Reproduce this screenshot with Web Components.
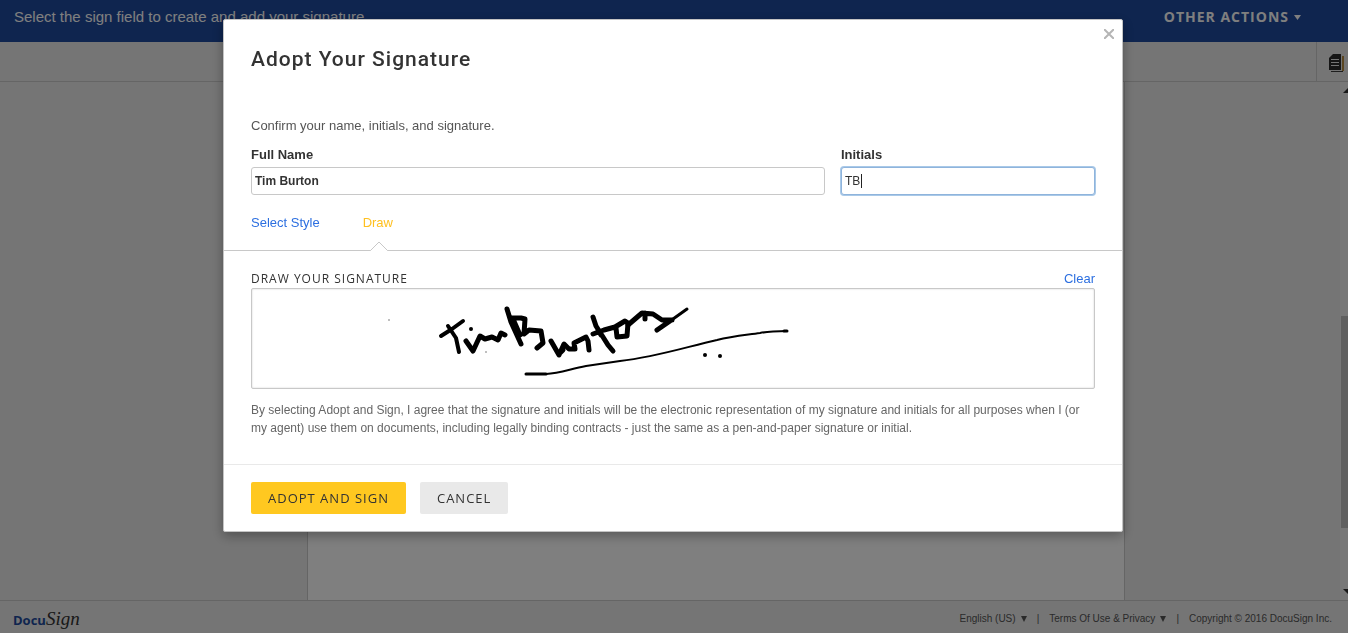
<!DOCTYPE html>
<html lang="en">
<head>
  <meta charset="UTF-8">
  <meta name="viewport" content="width=device-width, initial-scale=1.0">
  <title>Adopt Your Signature</title>
  <style>
    body {
      margin: 0;
      font-family: "Liberation Sans", Arial, sans-serif;
      overflow: hidden;
    }
  </style>
</head>
<body>
  <signing-page></signing-page>
  <modal-dialog heading="Adopt Your Signature">
    <signature-form></signature-form>
    <button slot="actions" class="primary" type="button">ADOPT AND SIGN</button>
    <button slot="actions" type="button">CANCEL</button>
  </modal-dialog>

  <script>
    class ActionHeader extends HTMLElement {
      constructor() {
        super();
        this.attachShadow({ mode: "open" });
      }

      connectedCallback() {
        this.shadowRoot.innerHTML = `
          <style>
            :host {
              display: flex;
              justify-content: space-between;
              align-items: flex-start;
              height: 42px;
              padding: 8px 47px 0 14px;
              box-sizing: border-box;
              background: #1e4a9e;
              color: #fff;
              font-size: 15px;
              line-height: 18px;
            }

            button {
              display: flex;
              align-items: center;
              gap: 5px;
              padding: 0;
              border: 0;
              background: none;
              color: inherit;
              font: bold 14px/18px "Open Sans", sans-serif;
              letter-spacing: 1px;
            }
          </style>
          <span>Select the sign field to create and add your signature</span>
          <button type="button">OTHER ACTIONS
            <svg width="7" height="5" viewBox="0 0 7 5" fill="currentColor" aria-hidden="true"><path d="M0 0h7L3.5 5z"/></svg>
          </button>
        `;
      }
    }

    class ToolBar extends HTMLElement {
      constructor() {
        super();
        this.attachShadow({ mode: "open" });
      }

      connectedCallback() {
        this.shadowRoot.innerHTML = `
          <style>
            :host {
              display: flex;
              justify-content: flex-end;
              height: 40px;
              box-sizing: border-box;
              border-bottom: 1px solid #cacaca;
            }

            button {
              display: flex;
              align-items: center;
              width: 32px;
              padding: 2px 0 0 11px;
              box-sizing: border-box;
              border: 0;
              border-left: 1px solid #cacaca;
              background: none;
            }

            svg {
              flex: none;
            }
          </style>
          <button type="button" aria-label="Documents">
            <svg width="17" height="20" viewBox="0 0 17 20" aria-hidden="true">
              <path d="M3 18h12v1H3z" fill="#3c3c3c"/>
              <path d="M14 3h2v15h-2z" fill="#b58a40"/>
              <path d="M5 1h8v16H1V5z" fill="#2c2c2c"/>
              <path d="M3 6.500h8M3 9.500h8M3 12.500h8" stroke="#eaeaea"/>
            </svg>
          </button>
        `;
      }
    }

    class DocumentArea extends HTMLElement {
      constructor() {
        super();
        this.attachShadow({ mode: "open" });
      }

      connectedCallback() {
        this.shadowRoot.innerHTML = `
          <style>
            :host {
              display: flex;
              flex: 1;
              min-height: 0;
            }

            .desk {
              flex: 1;
              display: grid;
              grid-template-columns: 10fr minmax(0, 818px) 7fr;
            }

            .sheet {
              grid-column: 2;
              background: #fff;
              border: solid #cacaca;
              border-width: 0 1px;
            }

            .scrollbar {
              display: flex;
              flex-direction: column;
              align-items: flex-end;
              justify-content: space-between;
              width: 8px;
              padding: 6px 0;
              box-sizing: border-box;
              background: #f1f1f1;
              overflow: hidden;
            }

            .track {
              flex: 1;
              display: grid;
              grid-template-rows: 22fr 21fr 6fr;
              width: 7px;
            }

            .thumb {
              grid-row: 2;
              background: #c1c1c1;
            }

            svg {
              display: block;
            }
          </style>
          <div class="desk"><div class="sheet"></div></div>
          <div class="scrollbar">
            <svg width="5" height="5" viewBox="0 0 5 5" aria-hidden="true"><path d="M5 0v5H0z" fill="#333"/></svg>
            <div class="track"><div class="thumb"></div></div>
            <svg width="5" height="5" viewBox="0 0 5 5" aria-hidden="true"><path d="M0 0h5v5z" fill="#333"/></svg>
          </div>
        `;
      }
    }

    class PageFooter extends HTMLElement {
      constructor() {
        super();
        this.attachShadow({ mode: "open" });
      }

      connectedCallback() {
        this.shadowRoot.innerHTML = `
          <style>
            :host {
              display: flex;
              justify-content: space-between;
              align-items: center;
              height: 33px;
              padding: 4px 16px 0 13px;
              box-sizing: border-box;
              border-top: 1px solid #cacaca;
              color: #555;
              font-size: 10px;
              line-height: 18px;
            }

            .logo {
              display: flex;
              align-items: baseline;
              color: #1e4a9e;
              font: bold 13px/20px "Open Sans", sans-serif;
              text-decoration: none;
            }

            .logo i {
              color: #333;
              font: italic 19px/20px "Liberation Serif", serif;
            }

            nav {
              display: flex;
              align-items: center;
              gap: 10px;
            }

            button {
              display: flex;
              align-items: center;
              gap: 5px;
              padding: 0;
              border: 0;
              background: none;
              color: inherit;
              font: inherit;
            }
          </style>
          <a class="logo" href="#">Docu<i>Sign</i></a>
          <nav>
            <button type="button">English (US)
              <svg width="6" height="6" viewBox="0 0 6 6" fill="currentColor" aria-hidden="true"><path d="M0 0h6L3 6z"/></svg>
            </button>
            <span>|</span>
            <button type="button">Terms Of Use &amp; Privacy
              <svg width="6" height="6" viewBox="0 0 6 6" fill="currentColor" aria-hidden="true"><path d="M0 0h6L3 6z"/></svg>
            </button>
            <span>|</span>
            <span>Copyright © 2016 DocuSign Inc.</span>
          </nav>
        `;
      }
    }

    class SigningPage extends HTMLElement {
      constructor() {
        super();
        this.attachShadow({ mode: "open" });
      }

      connectedCallback() {
        this.shadowRoot.innerHTML = `
          <style>
            :host {
              display: flex;
              flex-direction: column;
              height: 100vh;
              background: #eaeaea;
            }
          </style>
          <action-header></action-header>
          <tool-bar></tool-bar>
          <document-area></document-area>
          <page-footer></page-footer>
        `;
      }
    }

    class ModalDialog extends HTMLElement {
      constructor() {
        super();
        this.attachShadow({ mode: "open" });
      }

      connectedCallback() {
        this.shadowRoot.innerHTML = `
          <style>
            :host {
              position: fixed;
              inset: 0;
              display: flex;
              justify-content: center;
              align-items: flex-start;
              padding: 19px 16px 19px 14px;
              background: rgba(0, 0, 0, 0.5);
            }

            .dialog {
              position: relative;
              width: 100%;
              max-width: 900px;
              box-sizing: border-box;
              background: #fff;
              border: 1px solid #c4c4c4;
              border-radius: 2px;
              box-shadow: 0 4px 12px rgba(0, 0, 0, 0.3);
            }

            h1 {
              margin: 0;
              padding: 24px 27px 0;
              color: #333;
              font: 500 21px/30px Roboto, sans-serif;
              letter-spacing: 1px;
            }

            .close {
              position: absolute;
              top: 9px;
              right: 8px;
              padding: 0;
              border: 0;
              background: none;
              line-height: 0;
            }

            footer {
              display: flex;
              gap: 14px;
              padding: 17px 27px;
              border-top: 1px solid #e9e9e9;
            }

            ::slotted(button) {
              height: 32px;
              padding: 0 17px;
              border: 0;
              border-radius: 2px;
              background: #e9e9e9;
              color: #333;
              font: 13px/18px "Open Sans", sans-serif;
              letter-spacing: 1px;
            }

            ::slotted(.primary) {
              background: #ffc820;
            }
          </style>
          <div class="dialog" role="dialog" aria-modal="true" aria-labelledby="heading">
            <button class="close" type="button" aria-label="Close">
              <svg width="10" height="10" viewBox="0 0 10 10" stroke="#b5b5b5" stroke-width="2" aria-hidden="true"><path d="M0 0l10 10M10 0L0 10"/></svg>
            </button>
            <h1 id="heading">${this.getAttribute("heading")}</h1>
            <slot></slot>
            <footer><slot name="actions"></slot></footer>
          </div>
        `;
      }
    }

    class SignatureForm extends HTMLElement {
      constructor() {
        super();
        this.attachShadow({ mode: "open" });
      }

      connectedCallback() {
        this.shadowRoot.innerHTML = `
          <style>
            :host {
              display: block;
              padding-top: 43px;
              color: #555;
              font-size: 13px;
              line-height: 18px;
            }

            p {
              margin: 0;
            }

            a {
              color: #2c6fe0;
              text-decoration: none;
            }

            .details {
              padding: 0 27px;
            }

            .fields {
              display: grid;
              grid-template-columns: 61fr 27fr;
              gap: 16px;
              margin-top: 11px;
            }

            label {
              display: block;
              margin-bottom: 3px;
              color: #333;
              font-weight: bold;
            }

            input {
              display: block;
              width: 100%;
              height: 28px;
              padding: 0 3px;
              box-sizing: border-box;
              border: 1px solid #c8c8c8;
              border-radius: 3px;
              color: #333;
              font: bold 12px "Liberation Sans", Arial, sans-serif;
            }

            /* the active field carries its own caret */
            #initials {
              border-color: #8fb4dc;
              outline: 0;
              box-shadow: 0 0 0 1px #a9c9e8;
              background: linear-gradient(#222, #222) 19px center / 1px 14px no-repeat #fff;
              caret-color: transparent;
              font-weight: normal;
            }

            .tabs {
              display: flex;
              gap: 43px;
              margin-top: 19px;
              padding: 0 27px;
              border-bottom: 1px solid #c8c8c8;
            }

            .tabs a {
              position: relative;
              padding-bottom: 18px;
            }

            .tabs .active {
              color: #ffc020;
            }

            .tabs svg {
              position: absolute;
              left: 50%;
              bottom: -1px;
              margin-left: -8px;
            }

            .draw {
              padding: 19px 27px 27px;
            }

            .bar {
              display: flex;
              justify-content: space-between;
            }

            h2 {
              margin: 0;
              color: #333;
              font: 12px/18px "Open Sans", sans-serif;
              letter-spacing: 1px;
            }

            .terms {
              margin-top: 12px;
              color: #666;
              font-size: 12px;
            }
          </style>
          <p class="details">Confirm your name, initials, and signature.</p>
          <div class="details fields">
            <div>
              <label for="name">Full Name</label>
              <input id="name" type="text" value="Tim Burton">
            </div>
            <div>
              <label for="initials">Initials</label>
              <input id="initials" type="text" value="TB">
            </div>
          </div>
          <nav class="tabs">
            <a href="#style">Select Style</a>
            <a href="#draw" class="active">Draw
              <svg width="18" height="10" viewBox="0 0 18 10" aria-hidden="true">
                <path d="M0 10L9 1l9 9z" fill="#fff"/>
                <path d="M0 9.500h.5L9 1l8.500 8.500h.5" fill="none" stroke="#c8c8c8"/>
              </svg>
            </a>
          </nav>
          <section class="draw">
            <div class="bar">
              <h2>DRAW YOUR SIGNATURE</h2>
              <a href="#clear">Clear</a>
            </div>
            <signature-pad></signature-pad>
            <p class="terms">By selecting Adopt and Sign, I agree that the signature and initials will be the electronic representation of my signature and initials for all purposes when I (or my agent) use them on documents, including legally binding contracts - just the same as a pen-and-paper signature or initial.</p>
          </section>
        `;
      }
    }

    class SignaturePad extends HTMLElement {
      constructor() {
        super();
        this.attachShadow({ mode: "open" });
      }

      connectedCallback() {
        this.shadowRoot.innerHTML = `
          <style>
            :host {
              display: block;
              border: 1px solid #c8c8c8;
              border-radius: 2px;
              box-shadow: inset 0 0 2px rgba(0, 0, 0, 0.2);
            }

            svg {
              display: block;
              width: 100%;
              height: 99px;
            }
          </style>
          <svg viewBox="252 289 842 99" role="img" aria-label="Drawn signature" fill="none" stroke="#000" stroke-width="4" stroke-linecap="round" stroke-linejoin="round">
            <path d="M441 336l11-7 11-8M448 326l4 6 4 6 3 14"/>
            <g stroke-width="5">
              <path d="M466 341l7 10 7-15 5 3 7-2 6 3 3-7 4 2"/>
              <path d="M507 309l4 13 5 11 5 11M512 318h9l4 1-1 15 5-4 12 1 2 12-6 5M513 319l7 16"/>
              <path d="M551 341l8 14 5-11 5 5h6l-1-6 12-6 2 4 1 9M559 354l4-4"/>
              <path d="M593 317l3 9 7 11 5 8 5 6M593 334l11-4 11-3 10-6 3 2-1 13-10 1-1-9M601 335l-3-5"/>
              <path d="M628 325l14-12 11 1 9 6h10M645 313v6M670 321l-13 9"/>
            </g>
            <path d="M666 324l21-15" stroke-width="3"/>
            <path d="M526 374h20c14-1 24-5 40-8l34-5c36-4 66-14 97-21 16-4 30-5 43-7 10-2 18-2 27-2" stroke-width="2"/>
            <path d="M526 374h20M784 331h3" stroke-width="3"/>
            <g fill="#000" stroke="none">
              <circle cx="471" cy="329" r="2"/>
              <circle cx="705" cy="355" r="2"/>
              <circle cx="720" cy="356" r="2"/>
              <circle cx="486" cy="352" r="1" fill="#aaa"/>
              <circle cx="389" cy="320" r="1" fill="#aaa"/>
            </g>
          </svg>
        `;
      }
    }

    customElements.define("action-header", ActionHeader);
    customElements.define("tool-bar", ToolBar);
    customElements.define("document-area", DocumentArea);
    customElements.define("page-footer", PageFooter);
    customElements.define("signing-page", SigningPage);
    customElements.define("signature-pad", SignaturePad);
    customElements.define("signature-form", SignatureForm);
    customElements.define("modal-dialog", ModalDialog);
  </script>
</body>
</html>
